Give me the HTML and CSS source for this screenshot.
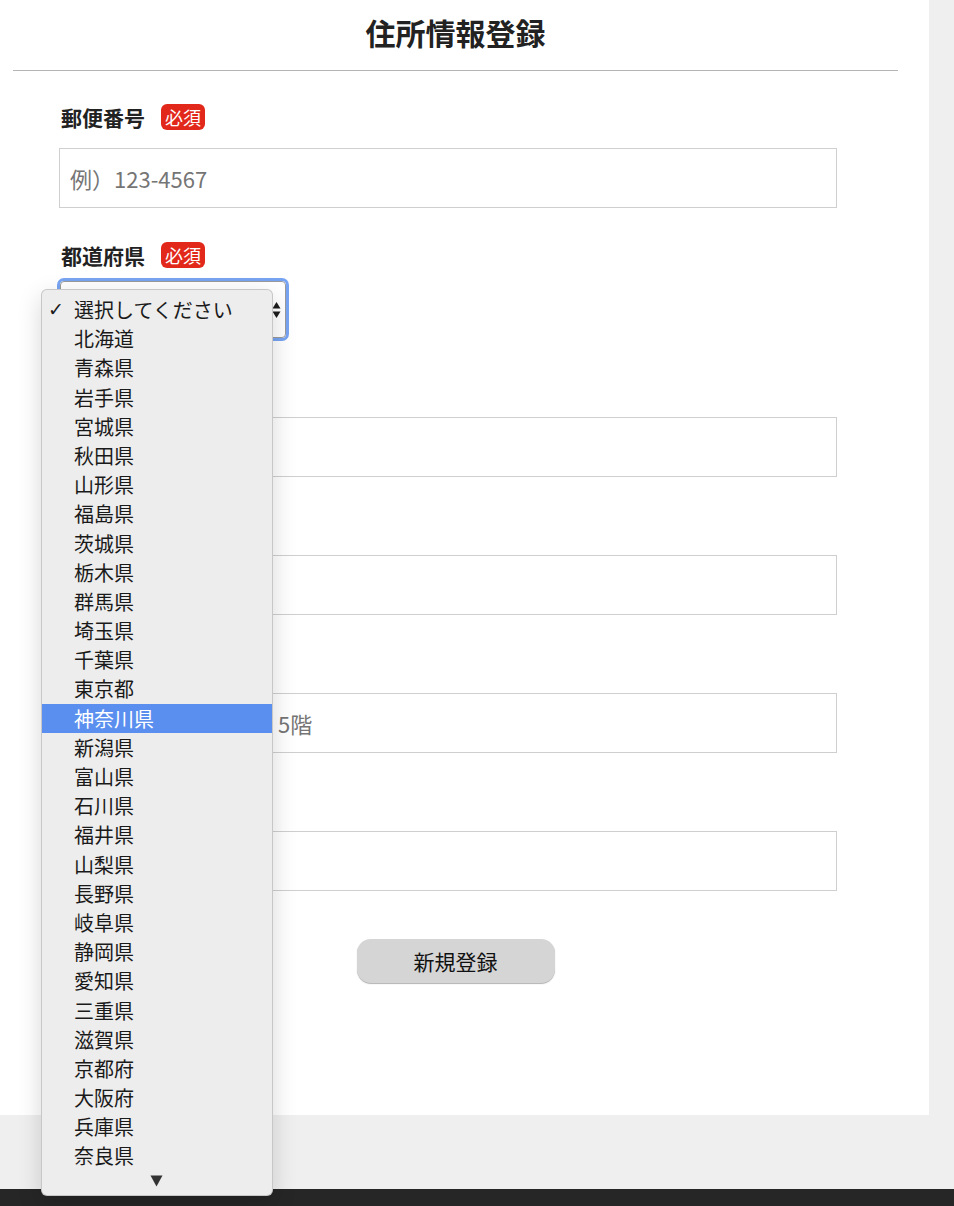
FILE: index.html
```html
<!DOCTYPE html>
<html lang="ja">
<head>
    <meta charset="UTF-8">
    <meta name="viewport" content="width=device-width, initial-scale=1.0">
    <title>住所情報登録</title>
    <link rel="stylesheet" href="styles.css">
</head>
<body>
    <div class="page">
        <div class="panel">
            <div class="container">
                <h1 class="title">住所情報登録</h1>

                <form class="form">
                    <div class="field">
                        <div class="label-row"><span class="label">郵便番号</span><span class="badge">必須</span></div>
                        <input class="text-input" type="text" placeholder="例）123-4567">
                    </div>

                    <div class="field field-select">
                        <div class="label-row"><span class="label">都道府県</span><span class="badge">必須</span></div>
                        <div class="select-box">
                            <span class="select-text">選択してください</span>
                            <svg class="select-arrows" width="9" height="18" viewBox="0 0 9 18">
                                <path d="M4.5 1 L8.5 7.5 L0.5 7.5 Z" fill="#1c1c1c"/>
                                <path d="M4.5 17 L8.5 10.5 L0.5 10.5 Z" fill="#1c1c1c"/>
                            </svg>
                        </div>
                    </div>

                    <div class="field">
                        <div class="label-row"><span class="label">市区町村</span><span class="badge">必須</span></div>
                        <input class="text-input" type="text" placeholder="例）横浜市緑区">
                    </div>

                    <div class="field">
                        <div class="label-row"><span class="label">番地</span><span class="badge">必須</span></div>
                        <input class="text-input" type="text" placeholder="例）青山1-1-1">
                    </div>

                    <div class="field">
                        <div class="label-row"><span class="label">建物名</span></div>
                        <input class="text-input wide-gap" type="text" placeholder="例）〇〇マンション 5階">
                    </div>

                    <div class="field">
                        <div class="label-row"><span class="label">電話番号</span><span class="badge">必須</span></div>
                        <input class="text-input" type="text" placeholder="例）09012345678">
                    </div>

                    <div class="actions">
                        <button class="submit" type="button">新規登録</button>
                    </div>
                </form>
            </div>
        </div>

        <div class="gap"></div>
        <footer class="footer"></footer>

        <!-- open prefecture menu -->
        <ul class="dropdown">
            <li class="option checked">選択してください</li>
            <li class="option">北海道</li>
            <li class="option">青森県</li>
            <li class="option">岩手県</li>
            <li class="option">宮城県</li>
            <li class="option">秋田県</li>
            <li class="option">山形県</li>
            <li class="option">福島県</li>
            <li class="option">茨城県</li>
            <li class="option">栃木県</li>
            <li class="option">群馬県</li>
            <li class="option">埼玉県</li>
            <li class="option">千葉県</li>
            <li class="option">東京都</li>
            <li class="option active">神奈川県</li>
            <li class="option">新潟県</li>
            <li class="option">富山県</li>
            <li class="option">石川県</li>
            <li class="option">福井県</li>
            <li class="option">山梨県</li>
            <li class="option">長野県</li>
            <li class="option">岐阜県</li>
            <li class="option">静岡県</li>
            <li class="option">愛知県</li>
            <li class="option">三重県</li>
            <li class="option">滋賀県</li>
            <li class="option">京都府</li>
            <li class="option">大阪府</li>
            <li class="option">兵庫県</li>
            <li class="option">奈良県</li>
            <li class="more">
                <svg width="13" height="12" viewBox="0 0 13 12"><path d="M0.5 0.5 L12.5 0.5 L6.5 11.5 Z" fill="#333"/></svg>
            </li>
        </ul>
    </div>
</body>
</html>
```

FILE: styles.css
```css
* {
    margin: 0;
    padding: 0;
    box-sizing: border-box;
}

body {
    background-color: #efefef;
    font-family: "Noto Sans CJK JP", "Noto Sans", sans-serif;
    color: #222;
}

.page {
    position: relative;
    height: 1206px;
    display: flex;
    flex-direction: column;
}

.panel {
    width: 929px;
    height: 1115px;
    background-color: #fff;
}

.gap {
    flex: 1;
}

.footer {
    height: 17px;
    background-color: #262626;
}

.container {
    width: 885px;
    margin-left: 13px;
}

.title {
    font-size: 30px;
    font-weight: 700;
    line-height: 40px;
    text-align: center;
    padding: 12px 0 18px;
    border-bottom: 1px solid #b4b4b4;
    color: #222;
}

.form {
    padding-top: 33px;
}

.field {
    margin: 0 0 34px 46px;
}

.label-row {
    display: flex;
    align-items: center;
    gap: 16px;
    height: 26px;
    margin-bottom: 18px;
    padding-left: 2px;
}

.label {
    font-size: 21px;
    font-weight: 700;
    line-height: 26px;
    color: #222;
}

.badge {
    background-color: #e2281b;
    color: #fff;
    font-size: 18px;
    line-height: 26px;
    padding: 0 4px;
    border-radius: 6px;
}

.text-input {
    display: block;
    width: 778px;
    height: 60px;
    border: 1px solid #cfcfcf;
    padding: 0 10px;
    font-family: inherit;
    font-size: 22px;
    color: #222;
    outline: none;
}

.text-input::placeholder {
    color: #757575;
}

.wide-gap::placeholder {
    word-spacing: 5px;
}

.field-select {
    margin-bottom: 35px;
}

.field-select .label-row {
    margin-bottom: 13px;
}

.select-box {
    display: flex;
    align-items: center;
    justify-content: space-between;
    width: 226px;
    height: 57px;
    margin-left: 1px;
    padding: 0 4px 0 12px;
    border: 1px solid #9a9a9a;
    border-radius: 4px;
    outline: 3px solid #77a4f2;
    background-color: #fff;
    font-size: 20px;
}

.actions {
    padding-top: 14px;
    text-align: center;
}

.submit {
    width: 198px;
    height: 44px;
    border: none;
    border-radius: 14px;
    background-color: #d5d5d5;
    box-shadow: 0 1px 1px rgba(0, 0, 0, 0.3);
    font-family: inherit;
    font-size: 21px;
    color: #111;
    cursor: pointer;
}

.dropdown {
    position: absolute;
    top: 289px;
    left: 41px;
    width: 232px;
    height: 907px;
    list-style: none;
    padding-top: 5px;
    background-color: #ededed;
    border: 1px solid rgba(0, 0, 0, 0.16);
    border-radius: 6px;
    box-shadow: 0 8px 24px rgba(0, 0, 0, 0.16);
}

.option {
    position: relative;
    height: 29.2px;
    line-height: 29.2px;
    padding-left: 32px;
    font-size: 20px;
    color: #1a1a1a;
}

.option.checked::before {
    content: "\2713";
    position: absolute;
    left: 6px;
    font-family: "DejaVu Sans", sans-serif;
    font-size: 19px;
}

.option.active {
    background-color: #5a8fef;
    color: #fff;
}

.more {
    height: 20px;
    display: flex;
    justify-content: center;
    align-items: center;
    padding-right: 2px;
}
```
